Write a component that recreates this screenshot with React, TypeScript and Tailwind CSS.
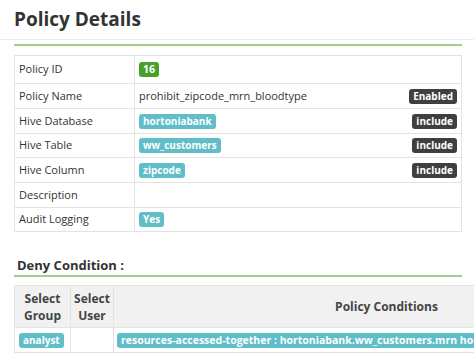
import React from "react";

const Teal = ({ children, size = "text-[10px]" }: { children: React.ReactNode; size?: string }) => (
  <span className={`inline-block rounded-[3px] bg-[#5fbec8] px-[4px] ${size} font-bold leading-[15px] text-white whitespace-nowrap`}>
    {children}
  </span>
);

const Dark = ({ children }: { children: React.ReactNode }) => (
  <span className="inline-block rounded-[3px] bg-[#3f3f3f] px-[4px] text-[10px] font-bold leading-[15px] text-white whitespace-nowrap">
    {children}
  </span>
);

export default function App() {
  const rows: { label: string; value: React.ReactNode; right?: React.ReactNode; h: string }[] = [
    {
      label: "Policy ID",
      value: (
        <span className="inline-block rounded-[3px] bg-[#48a02a] px-[4px] text-[10.5px] font-bold leading-[15px] text-white">
          16
        </span>
      ),
      h: "h-[28px]",
    },
    { label: "Policy Name", value: <span>prohibit_zipcode_mrn_bloodtype</span>, right: <Dark>Enabled</Dark>, h: "h-[25px]" },
    { label: "Hive Database", value: <Teal>hortoniabank</Teal>, right: <Dark>include</Dark>, h: "h-[25px]" },
    { label: "Hive Table", value: <Teal>ww_customers</Teal>, right: <Dark>include</Dark>, h: "h-[24px]" },
    { label: "Hive Column", value: <Teal>zipcode</Teal>, right: <Dark>include</Dark>, h: "h-[25px]" },
    { label: "Description", value: null, h: "h-[25px]" },
    { label: "Audit Logging", value: <Teal>Yes</Teal>, h: "h-[24px]" },
  ];

  return (
    <div className="relative h-[353px] w-[474px] overflow-hidden bg-white font-['Open_Sans',sans-serif] text-[#333]">
      <div className="flex h-[40px] items-center border-b border-[#ececec] px-[14px]">
        <h1 className="text-[19px] font-bold leading-none text-[#333]">Policy Details</h1>
      </div>
      <div className="pl-[14px] pr-[12px]">
        <div className="h-[6px] border-b-2 border-[#a5cb8d]" />
        <table className="mt-[9px] w-full border-collapse border border-[#e3e3e3] text-[11px]">
          <tbody>
            {rows.map((r) => (
              <tr key={r.label} className={`${r.h} border-b border-[#e3e3e3]`}>
                <td className="w-[120px] border-r border-[#e3e3e3] px-[4px] py-0 align-middle">{r.label}</td>
                <td className="px-[4px] py-0 align-middle">
                  <div className="flex items-center justify-between">
                    <div>{r.value}</div>
                    {r.right ? <div>{r.right}</div> : null}
                  </div>
                </td>
              </tr>
            ))}
          </tbody>
        </table>
        <div className="mt-[24px] pl-[3px] text-[13px] font-bold leading-[18px] text-[#333]">Deny Condition :</div>
        <div className="mt-[1px] h-0 border-b-2 border-[#a5cb8d]" />
      </div>
      <div className="pl-[14px]">
        <table className="mt-[8px] w-[560px] table-fixed border-collapse border border-[#e3e3e3] text-[11px]">
          <colgroup>
            <col className="w-[56px]" />
            <col className="w-[43px]" />
            <col />
          </colgroup>
          <thead>
            <tr className="h-[42px] bg-[#f1f1f1]">
              <th className="border-r border-[#e3e3e3] px-[2px] text-center text-[12px] font-bold leading-[17px] text-[#444]">
                Select
                <br />
                Group
              </th>
              <th className="border-r border-[#e3e3e3] px-[2px] text-center text-[12px] font-bold leading-[17px] text-[#444]">
                Select
                <br />
                User
              </th>
              <th className="text-center text-[12px] font-bold text-[#444]">
                <div className="pl-[86px]">Policy Conditions</div>
              </th>
            </tr>
          </thead>
          <tbody>
            <tr className="h-[25px] border-t border-[#e3e3e3]">
              <td className="border-r border-[#e3e3e3] px-[4px] align-middle">
                <Teal>analyst</Teal>
              </td>
              <td className="border-r border-[#e3e3e3]" />
              <td className="overflow-hidden px-[3px] align-middle">
                <Teal size="text-[10.5px]">resources-accessed-together : hortoniabank.ww_customers.mrn hortoniabank.ww_customers.bloodtype</Teal>
              </td>
            </tr>
          </tbody>
        </table>
      </div>
    </div>
  );
}
